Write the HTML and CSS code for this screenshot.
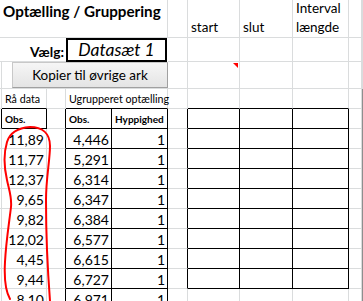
FILE: index.html
```html
<!DOCTYPE html>
<html>
<head>
<meta charset="utf-8">
<link rel="stylesheet" href="styles.css">
</head>
<body>
<div class="sheet">
  <div class="grid">
    <!-- row 1 -->
    <div class="c title span-pd">Optælling / Gruppering</div>
    <div class="c"></div>
    <div class="c hdr">start</div>
    <div class="c hdr">slut</div>
    <div class="c hdr wrap">Interval længde</div>
    <div class="c"></div>
    <div class="edge"></div>
    <!-- row 2 -->
    <div class="c label span-pb">Vælg:</div>
    <div class="c span-cd boxcell"><div class="dsbox">Datasæt 1</div></div>
    <div class="c"></div>
    <div class="c"></div>
    <div class="c"></div>
    <div class="c"></div>
    <div class="c"></div>
    <div class="edge"></div>
    <!-- row 3 -->
    <div class="c"></div>
    <div class="c"></div>
    <div class="c"></div>
    <div class="c"></div>
    <div class="c"></div>
    <div class="c"></div>
    <div class="c comment"></div>
    <div class="c"></div>
    <div class="c"></div>
    <div class="c"></div>
    <div class="edge"></div>
    <!-- row 4 -->
    <div class="c"></div>
    <div class="c kb small">Rå data</div>
    <div class="c"></div>
    <div class="c kb small span-cd">Ugrupperet optælling</div>
    <div class="c"></div>
    <div class="c kb"></div>
    <div class="c kb"></div>
    <div class="c kb"></div>
    <div class="c"></div>
    <div class="edge dark"></div>
    <!-- row 5 -->
    <div class="c kr"></div>
    <div class="c kr kb small bold">Obs.</div>
    <div class="c kr"></div>
    <div class="c kr kb small bold">Obs.</div>
    <div class="c kr kb small bold">Hyppighed</div>
    <div class="c kr"></div>
    <div class="c kr kb"></div>
    <div class="c kr kb"></div>
    <div class="c kr kb"></div>
    <div class="c"></div>
    <div class="edge dark"></div>
    <!-- row 6 -->
    <div class="c"></div><div class="c num">11,89</div><div class="c kr"></div>
    <div class="c kr kb num">4,446</div><div class="c kr kb num">1</div>
    <div class="c kr"></div><div class="c kr kb"></div><div class="c kr kb"></div><div class="c kr kb"></div>
    <div class="c"></div><div class="edge dark"></div>
    <!-- row 7 -->
    <div class="c"></div><div class="c num">11,77</div><div class="c kr"></div>
    <div class="c kr kb num">5,291</div><div class="c kr kb num">1</div>
    <div class="c kr"></div><div class="c kr kb"></div><div class="c kr kb"></div><div class="c kr kb"></div>
    <div class="c"></div><div class="edge dark"></div>
    <!-- row 8 -->
    <div class="c"></div><div class="c num">12,37</div><div class="c kr"></div>
    <div class="c kr kb num">6,314</div><div class="c kr kb num">1</div>
    <div class="c kr"></div><div class="c kr kb"></div><div class="c kr kb"></div><div class="c kr kb"></div>
    <div class="c"></div><div class="edge dark"></div>
    <!-- row 9 -->
    <div class="c"></div><div class="c num">9,65</div><div class="c kr"></div>
    <div class="c kr kb num">6,347</div><div class="c kr kb num">1</div>
    <div class="c kr"></div><div class="c kr kb"></div><div class="c kr kb"></div><div class="c kr kb"></div>
    <div class="c"></div><div class="edge dark"></div>
    <!-- row 10 -->
    <div class="c"></div><div class="c num">9,82</div><div class="c kr"></div>
    <div class="c kr kb num">6,384</div><div class="c kr kb num">1</div>
    <div class="c kr"></div><div class="c kr kb"></div><div class="c kr kb"></div><div class="c kr kb"></div>
    <div class="c"></div><div class="edge dark"></div>
    <!-- row 11 -->
    <div class="c"></div><div class="c num">12,02</div><div class="c kr"></div>
    <div class="c kr kb num">6,577</div><div class="c kr kb num">1</div>
    <div class="c kr"></div><div class="c kr kb"></div><div class="c kr kb"></div><div class="c kr kb"></div>
    <div class="c"></div><div class="edge dark"></div>
    <!-- row 12 -->
    <div class="c"></div><div class="c num">4,45</div><div class="c kr"></div>
    <div class="c kr kb num">6,615</div><div class="c kr kb num">1</div>
    <div class="c kr"></div><div class="c kr kb"></div><div class="c kr kb"></div><div class="c kr kb"></div>
    <div class="c"></div><div class="edge dark"></div>
    <!-- row 13 -->
    <div class="c"></div><div class="c num">9,44</div><div class="c kr"></div>
    <div class="c kr kb num">6,727</div><div class="c kr kb num">1</div>
    <div class="c kr"></div><div class="c kr kb"></div><div class="c kr kb"></div><div class="c kr kb"></div>
    <div class="c"></div><div class="edge dark"></div>
    <!-- row 14 -->
    <div class="c"></div><div class="c num">8,10</div><div class="c kr"></div>
    <div class="c kr kb num">6,971</div><div class="c kr kb num">1</div>
    <div class="c"></div><div class="c"></div><div class="c"></div><div class="c"></div>
    <div class="c"></div><div class="edge dark"></div>
  </div>

  <button class="copy-btn" type="button">Kopier til øvrige ark</button>

  <svg class="scribble" width="60" height="301" viewBox="0 0 60 301">
    <path d="M 10 299 C 6 292, 4 280, 5 262 C 6 242, 9 224, 11 207 C 12 197, 9 190, 7 180 C 4 167, 4 152, 7 142 C 10 132, 18 128, 30 127 C 42 127, 50 133, 50 146 C 50 160, 46 178, 46 200 C 46 230, 47 262, 50 301" fill="none" stroke="#ff0000" stroke-width="2" stroke-linecap="round"/>
  </svg>
</div>
</body>
</html>
```

FILE: styles.css
```css
* { box-sizing: border-box; }
html, body {
  margin: 0;
  padding: 0;
  background: #ffffff;
  overflow: hidden;
}
body {
  width: 363px;
  height: 301px;
  font-family: Lato, "Open Sans", sans-serif;
  color: #000;
}
.sheet {
  position: relative;
  width: 363px;
  height: 301px;
  overflow: hidden;
}
.grid {
  display: grid;
  grid-template-columns: 2px 45px 19px 46px 56px 20px 52px 53px 56px 13px 1px;
  grid-template-rows: 38px 24px 27px 20px repeat(10, 20px);
}
.c {
  border-right: 1px solid #dadcdd;
  border-bottom: 1px solid #dadcdd;
  white-space: nowrap;
  overflow: visible;
  position: relative;
}
.kr { border-right-color: #000; }
.kb { border-bottom-color: #000; }
.edge { background: #dadcdd; }
.edge.dark { background: #8e8e8e; }

.span-pd { grid-column: 1 / 6; }
.span-pb { grid-column: 1 / 4; }
.span-cd { grid-column: span 2; }

.title {
  font-weight: 700;
  font-size: 15.2px;
  padding: 2px 0 0 3px;
  line-height: 18px;
}
.hdr {
  font-size: 13.5px;
  padding: 0 0 1px 3px;
  display: flex;
  align-items: flex-end;
  line-height: 18px;
}
.hdr.wrap { white-space: normal; line-height: 18.5px; }
.label {
  font-weight: 700;
  font-size: 13.8px;
  text-align: right;
  padding: 6px 2px 0 0;
  line-height: 16px;
  border-right: none;
}
.boxcell { border-bottom: none; border-right: none; padding: 0 1px 0 0; }
.dsbox {
  height: 24px;
  border: 2px solid #000;
  font-style: italic;
  font-size: 17.5px;
  text-align: center;
  line-height: 19px;
}
.comment::after {
  content: "";
  position: absolute;
  top: 1px;
  right: 1px;
  border-top: 5px solid #ff0000;
  border-left: 5px solid transparent;
}
.small {
  font-size: 10.7px;
  padding: 0 0 0 3px;
  line-height: 20px;
}
.bold { font-weight: 700; font-size: 10px; }
.num {
  font-size: 14px;
  text-align: right;
  padding-right: 2px;
  line-height: 21px;
}
.copy-btn {
  position: absolute;
  left: 12px;
  top: 62px;
  width: 156px;
  height: 26px;
  margin: 0;
  padding: 0;
  font-family: Lato, "Open Sans", sans-serif;
  font-size: 13.5px;
  color: #000;
  background: linear-gradient(#f6f6f6, #e4e4e4);
  border: 1px solid #c8c8c8;
  border-right-color: #a0a0a0;
  border-bottom-color: #a0a0a0;
  border-radius: 0;
}
.scribble {
  position: absolute;
  left: 0;
  top: 0;
}
```
